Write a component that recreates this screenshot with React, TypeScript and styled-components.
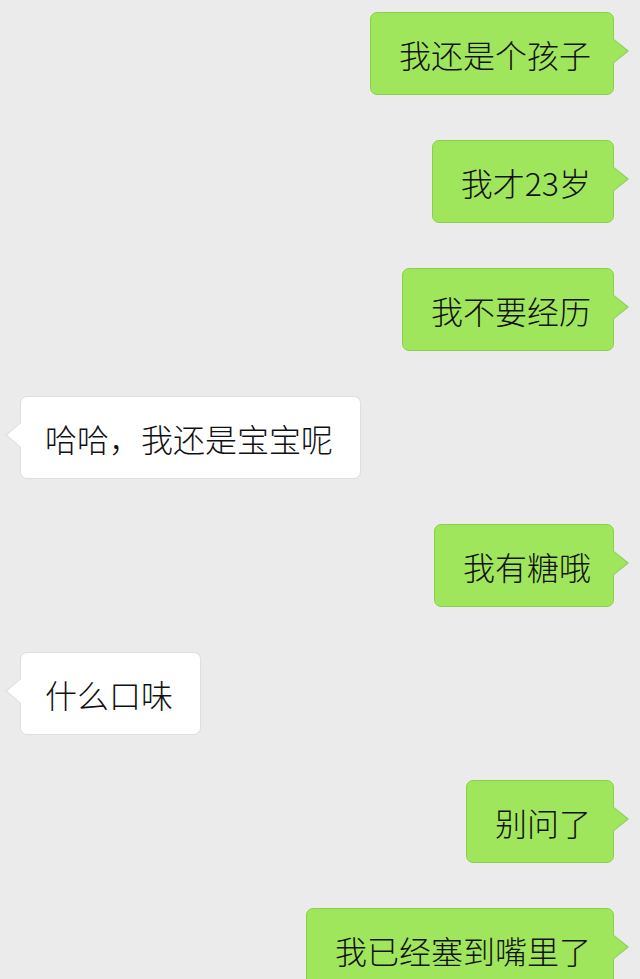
import styled, { createGlobalStyle } from 'styled-components';

const GlobalStyle = createGlobalStyle`
  html, body {
    margin: 0;
    padding: 0;
    background: #ebebeb;
  }
  body {
    font-family: "Noto Sans CJK SC", "Noto Sans", sans-serif;
  }
`;

const Chat = styled.main`
  display: flex;
  flex-direction: column;
  gap: 45px;
  width: 640px;
  height: 979px;
  overflow: hidden;
  padding: 12px 26px 0 20px;
  box-sizing: border-box;
  background: #ebebeb;
`;

const Row = styled.div<{ $mine: boolean }>`
  display: flex;
  justify-content: ${(p) => (p.$mine ? 'flex-end' : 'flex-start')};
`;

const Bubble = styled.div<{ $mine: boolean }>`
  position: relative;
  display: flex;
  align-items: center;
  height: 83px;
  box-sizing: border-box;
  padding: ${(p) => (p.$mine ? '0 22px 0 28px' : '0 27px 0 24px')};
  border-radius: 7px;
  border: 1px solid ${(p) => (p.$mine ? '#8ccf4e' : '#dedede')};
  background: ${(p) => (p.$mine ? '#a0e65c' : '#ffffff')};
  color: #111111;
  font-size: 32px;
  font-weight: 300;
  line-height: 1;
  white-space: nowrap;

  &::before,
  &::after {
    content: '';
    position: absolute;
    top: 26px;
    width: 0;
    height: 0;
    border-top: 12px solid transparent;
    border-bottom: 12px solid transparent;
  }
  &::before {
    ${(p) =>
      p.$mine
        ? 'right: -16px; border-left: 15px solid #8ccf4e;'
        : 'left: -16px; border-right: 15px solid #dedede;'}
  }
  &::after {
    ${(p) =>
      p.$mine
        ? 'right: -14px; border-left: 14px solid #a0e65c;'
        : 'left: -14px; border-right: 14px solid #ffffff;'}
  }
`;

const messages = [
  { mine: true, text: '我还是个孩子' },
  { mine: true, text: '我才23岁' },
  { mine: true, text: '我不要经历' },
  { mine: false, text: '哈哈，我还是宝宝呢' },
  { mine: true, text: '我有糖哦' },
  { mine: false, text: '什么口味' },
  { mine: true, text: '别问了' },
  { mine: true, text: '我已经塞到嘴里了' },
];

function App() {
  return (
    <>
      <GlobalStyle />
      <Chat>
        {messages.map((m, i) => (
          <Row key={i} $mine={m.mine}>
            <Bubble $mine={m.mine}>{m.text}</Bubble>
          </Row>
        ))}
      </Chat>
    </>
  );
}

export default App;
